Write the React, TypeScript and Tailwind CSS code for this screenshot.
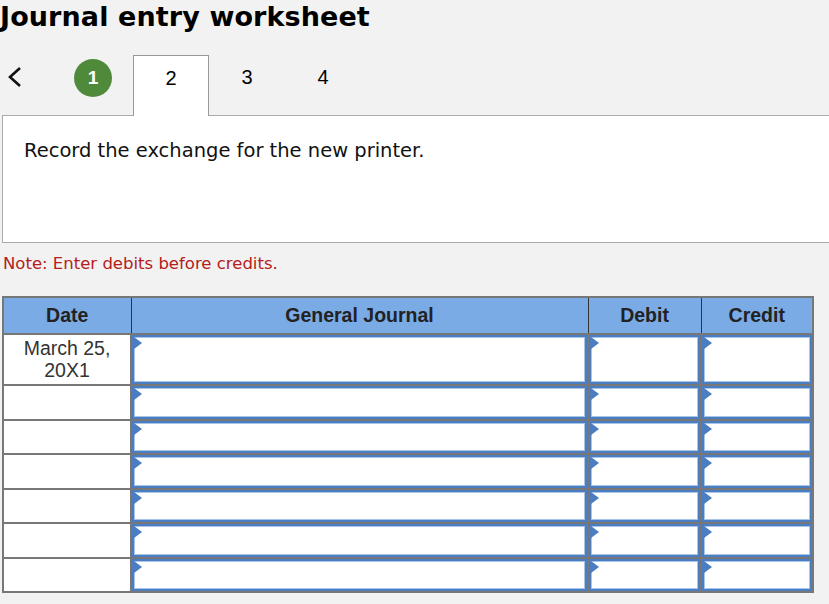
import React from 'react';

const ROWS = [
  { date: 'March 25,\n20X1', tall: true },
  { date: '', tall: false },
  { date: '', tall: false },
  { date: '', tall: false },
  { date: '', tall: false },
  { date: '', tall: false },
  { date: '', tall: false },
];

const InputCell: React.FC = () => (
  <div className="relative h-full border-2 border-[#4a7dc1] bg-white shadow-[inset_0_0_0_1px_#a8c4e8]">
    <svg className="absolute left-0 top-0" width="8" height="12" viewBox="0 0 8 12">
      <polygon points="0,0 8,6 0,12" fill="#4a7dc1" />
    </svg>
  </div>
);

const App: React.FC = () => {
  return (
    <div className="w-[829px] h-[604px] overflow-hidden bg-[#f2f2f2] text-black" style={{ fontFamily: '"DejaVu Sans", Verdana, sans-serif' }}>
      <h1 className="pt-[1px] pl-0 text-[27px] leading-[32px] font-bold tracking-[0.1px]">Journal entry worksheet</h1>

      <div className="flex items-end h-[62px] mt-[20px]" style={{ fontFamily: '"Liberation Sans", Arial, sans-serif' }}>
        <div className="w-[74px] h-[60px] flex items-start">
          <div className="h-[44px] flex items-center pl-[6px]">
            <svg width="18" height="22" viewBox="0 0 18 22">
              <path d="M14 2 L4 11 L14 20" fill="none" stroke="#111" strokeWidth="2.6" />
            </svg>
          </div>
        </div>
        <div className="w-[59px] h-[60px] flex items-start">
          <div className="h-[46px] flex items-center">
            <div className="w-[38px] h-[38px] rounded-full bg-[#4e8a3a] text-white text-[19px] font-bold flex items-center justify-center">1</div>
          </div>
        </div>
        <div className="relative w-[76px] h-[61px] bg-white border border-b-0 border-[#999] -mb-px z-10">
          <div className="h-[43px] flex items-center justify-center text-[20px]">2</div>
        </div>
        <div className="w-[76px] h-[60px]">
          <div className="h-[44px] flex items-center justify-center text-[20px]">3</div>
        </div>
        <div className="w-[76px] h-[60px]">
          <div className="h-[44px] flex items-center justify-center text-[20px]">4</div>
        </div>
      </div>

      <div className="ml-[2px] w-[840px] h-[128px] bg-white border border-[#aaa] pl-[21px] pt-[20px] text-[19.5px] text-[#111]">
        Record the exchange for the new printer.
      </div>

      <div className="ml-[3px] mt-[8px] h-[25px] leading-[25px] text-[16.5px] text-[#b3201b]">Note: Enter debits before credits.</div>

      <table className="ml-[2px] mt-[20px] border-collapse border-2 border-[#777] table-fixed" style={{ fontFamily: '"Liberation Sans", Arial, sans-serif' }}>
        <colgroup>
          <col className="w-[128px]" />
          <col className="w-[457px]" />
          <col className="w-[113px]" />
          <col className="w-[112px]" />
        </colgroup>
        <thead>
          <tr className="h-[37px] bg-[#7aabe5] text-[19.5px] font-bold text-[#222]">
            <th className="border border-[#333]">Date</th>
            <th className="border border-[#333]">General Journal</th>
            <th className="border border-[#333]">Debit</th>
            <th className="border border-[#333]">Credit</th>
          </tr>
        </thead>
        <tbody>
          {ROWS.map((row, i) => (
            <tr key={i} className={row.tall ? 'h-[51px]' : 'h-[34.5px]'}>
              <td className="border-2 border-[#777] bg-white text-center text-[19.5px] leading-[22px] text-[#333] whitespace-pre-line align-top pt-[2px]">
                {row.date}
              </td>
              <td className="border-2 border-[#777] p-0 h-[inherit]"><InputCell /></td>
              <td className="border-2 border-[#777] p-0 h-[inherit]"><InputCell /></td>
              <td className="border-2 border-[#777] p-0 h-[inherit]"><InputCell /></td>
            </tr>
          ))}
        </tbody>
      </table>
    </div>
  );
};

export default App;
